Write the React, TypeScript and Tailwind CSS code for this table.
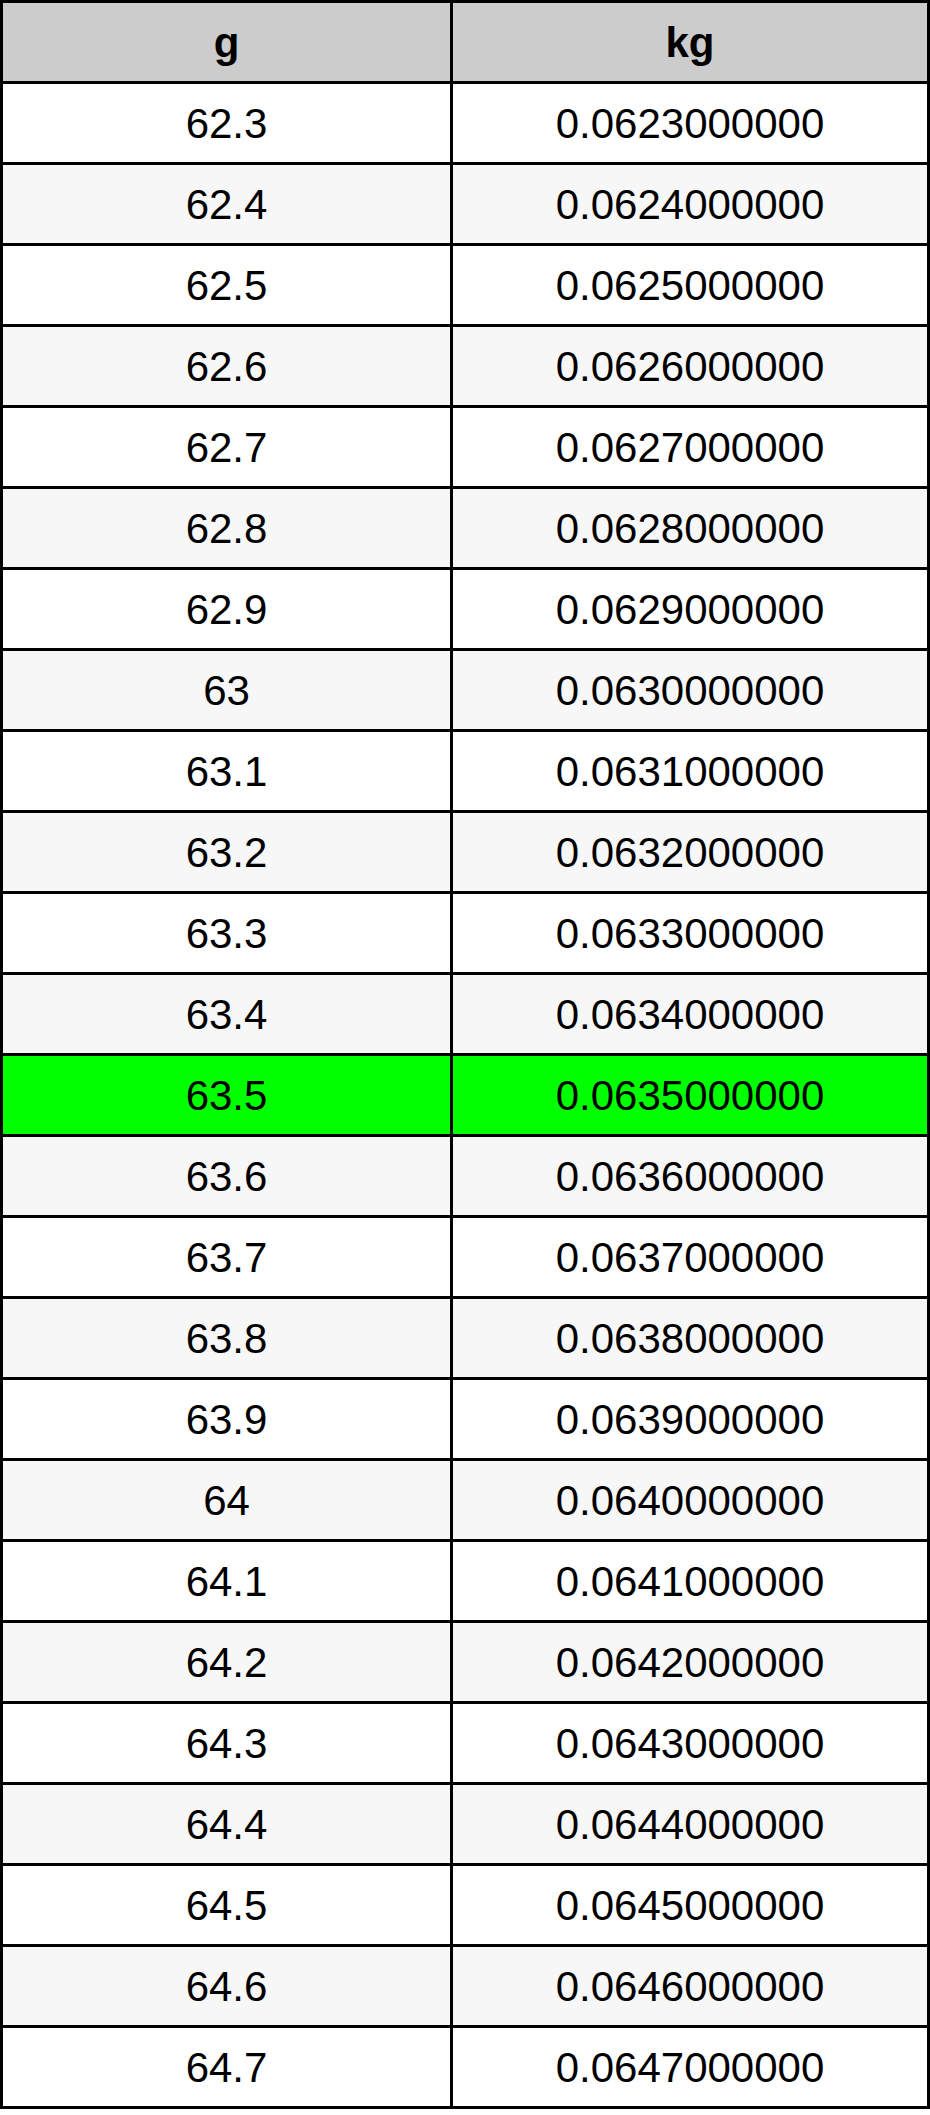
const rows: [string, string][] = [
  ['62.3', '0.0623000000'],
  ['62.4', '0.0624000000'],
  ['62.5', '0.0625000000'],
  ['62.6', '0.0626000000'],
  ['62.7', '0.0627000000'],
  ['62.8', '0.0628000000'],
  ['62.9', '0.0629000000'],
  ['63', '0.0630000000'],
  ['63.1', '0.0631000000'],
  ['63.2', '0.0632000000'],
  ['63.3', '0.0633000000'],
  ['63.4', '0.0634000000'],
  ['63.5', '0.0635000000'],
  ['63.6', '0.0636000000'],
  ['63.7', '0.0637000000'],
  ['63.8', '0.0638000000'],
  ['63.9', '0.0639000000'],
  ['64', '0.0640000000'],
  ['64.1', '0.0641000000'],
  ['64.2', '0.0642000000'],
  ['64.3', '0.0643000000'],
  ['64.4', '0.0644000000'],
  ['64.5', '0.0645000000'],
  ['64.6', '0.0646000000'],
  ['64.7', '0.0647000000'],
]

export default function App() {
  return (
    <div className="w-[930px] bg-white font-['Liberation_Sans',Arial,sans-serif] text-black">
      <div className="flex flex-col border-[3px] border-black">
        {/* header */}
        <div className="flex h-[81px] border-b-[3px] border-black bg-[#cccccc] text-[42px] font-bold">
          <div className="flex w-[450px] items-center justify-center border-r-[3px] border-black">g</div>
          <div className="flex flex-1 items-center justify-center">kg</div>
        </div>
        {rows.map(([g, kg], i) => {
          const bg = g === '63.5' ? 'bg-[#00ff00]' : i % 2 === 0 ? 'bg-white' : 'bg-[#f7f7f7]'
          const last = i === rows.length - 1
          return (
            <div
              key={g}
              className={`flex text-[42px] ${bg} ${last ? 'h-[78px]' : 'h-[81px] border-b-[3px] border-black'}`}
            >
              <div className="flex w-[450px] items-center justify-center border-r-[3px] border-black">{g}</div>
              <div className="flex flex-1 items-center justify-center">{kg}</div>
            </div>
          )
        })}
      </div>
    </div>
  )
}
